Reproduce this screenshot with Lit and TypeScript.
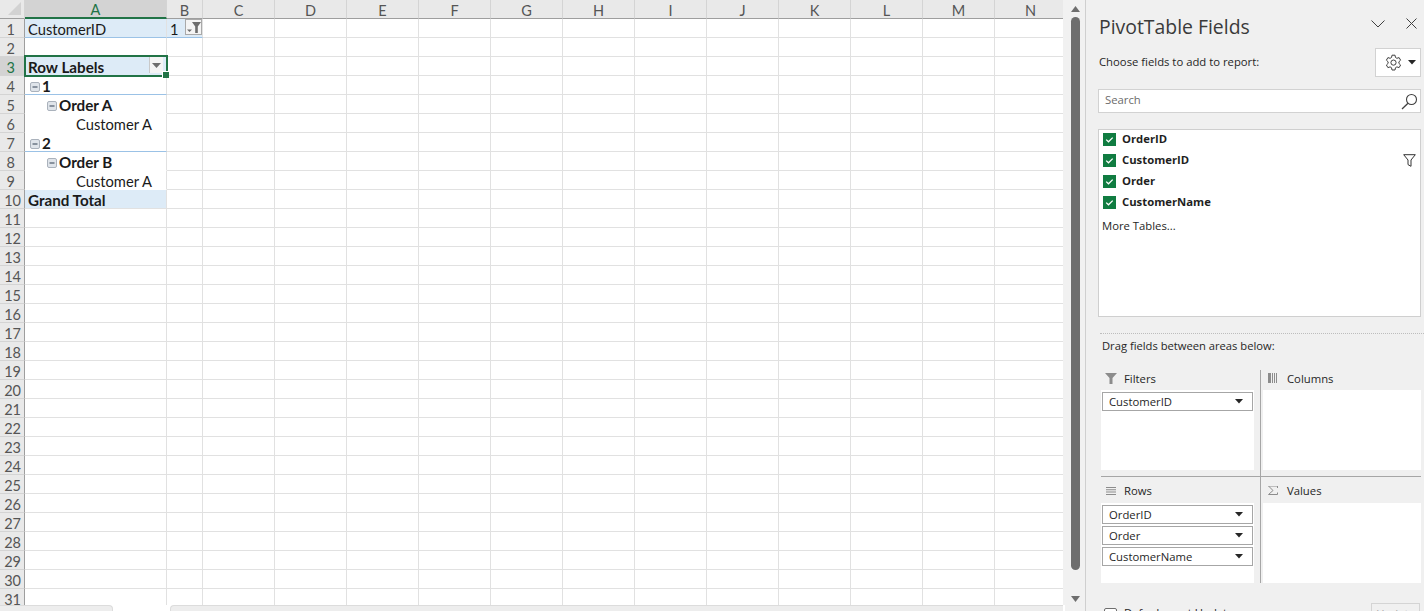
import { LitElement, html, css, svg } from "lit";
import { customElement } from "lit/decorators.js";

const COLS = ["A", "B", "C", "D", "E", "F", "G", "H", "I", "J", "K", "L", "M", "N"];
const ROWS = Array.from({ length: 31 }, (_, i) => i + 1);

const minus = html`<svg class="tog" width="10" height="10" viewBox="0 0 10 10"><rect x=".5" y=".5" width="9" height="9" rx="1.5" fill="#dfe4ea" stroke="#aab2bc"/><path d="M2.500 5h5" stroke="#4d5a6a" stroke-width="1.2"/></svg>`;
const caret = svg`<path d="M0 0h8L4 4.500z" fill="#262626"/>`;

type Cell = { cls?: string; body?: unknown };

const colA: Record<number, Cell> = {
  1: { cls: "fill blue-b", body: html`<span class="t">CustomerID</span>` },
  3: {
    cls: "fill bold nob",
    body: html`<span class="t">Row Labels</span><span class="drop a3"><svg width="9" height="5" viewBox="0 0 9 5"><path d="M0 0h9L4.500 5z" fill="#6d6d6d"/></svg></span>`,
  },
  4: { cls: "bold blue-b i1", body: html`${minus}<span class="t">1</span>` },
  5: { cls: "bold nob i2", body: html`${minus}<span class="t">Order A</span>` },
  6: { cls: "nob i3", body: html`<span class="t">Customer A</span>` },
  7: { cls: "bold blue-b i1", body: html`${minus}<span class="t">2</span>` },
  8: { cls: "bold nob i2", body: html`${minus}<span class="t">Order B</span>` },
  9: { cls: "nob i3", body: html`<span class="t">Customer A</span>` },
  10: { cls: "fill bold", body: html`<span class="t">Grand Total</span>` },
};

const fields = [
  { name: "OrderID", filter: false },
  { name: "CustomerID", filter: true },
  { name: "Order", filter: false },
  { name: "CustomerName", filter: false },
];

@customElement("app-root")
export class AppRoot extends LitElement {
  static styles = css`
    :host {
      display: flex;
      width: 1424px;
      height: 611px;
      overflow: hidden;
      background: #f0f0f0;
      font-family: "Open Sans", "Noto Sans", sans-serif;
      color: #262626;
    }
    .sheet {
      width: 1065px;
      flex: none;
      display: flex;
      flex-direction: column;
      overflow: hidden;
      background: #fff;
    }
    .gridwrap {
      height: 605px;
      flex: none;
      overflow: hidden;
      position: relative;
      background: #f1f1f1;
    }
    .grid {
      display: grid;
      grid-template-columns: 25px 142px 36px repeat(12, 72px);
      grid-template-rows: 19px repeat(31, 19px);
      width: 1063px;
      overflow: hidden;
      background: #fff;
      font-family: Lato, "Liberation Sans", sans-serif;
      font-size: 14.7px;
      color: #1a1a1a;
    }
    .corner {
      background: #e9e9e9;
      border-right: 1px solid #d4d4d4;
      border-bottom: 1px solid #9e9e9e;
      box-sizing: border-box;
      display: flex;
      align-items: flex-end;
      justify-content: flex-end;
      padding: 0 3px 3px 0;
    }
    .ch {
      box-sizing: border-box;
      background: #e9e9e9;
      border-right: 1px solid #d4d4d4;
      border-bottom: 1px solid #9e9e9e;
      display: flex;
      align-items: center;
      justify-content: center;
      color: #555;
      font-size: 14.500px;
      padding-top: 2px;
    }
    .ch.sel {
      background: #d3d3d3;
      color: #217346;
      border-bottom: 2px solid #217346;
    }
    .rh {
      box-sizing: border-box;
      background: #e9e9e9;
      border-right: 1px solid #9e9e9e;
      border-bottom: 1px solid #d4d4d4;
      display: flex;
      align-items: center;
      justify-content: flex-end;
      padding: 2px 9px 0 0;
      color: #555;
      font-size: 14.500px;
    }
    .rh.wide {
      padding-right: 3px;
    }
    .rh.sel {
      background: #d3d3d3;
      color: #217346;
    }
    .c {
      box-sizing: border-box;
      border-right: 1px solid #e1e1e1;
      border-bottom: 1px solid #e1e1e1;
      display: flex;
      align-items: center;
      white-space: nowrap;
      position: relative;
      padding: 2px 0 0 3px;
      min-width: 0;
    }
    .fill {
      background: #ddebf7;
    }
    .blue-b {
      border-bottom-color: #9bc2e6;
    }
    .nob {
      border-bottom-color: transparent;
    }
    .bold {
      font-weight: 700;
      font-size: 15.200px;
    }
    .i1 {
      padding-left: 5px;
    }
    .i2 {
      padding-left: 22px;
    }
    .i3 {
      padding-left: 51px;
    }
    .tog {
      flex: none;
      margin: 1px 2px 0 0;
    }
    .drop {
      position: absolute;
      box-sizing: border-box;
      background: #f4f4f4;
      display: flex;
      align-items: center;
      justify-content: center;
    }
    .drop.a3 {
      right: 3px;
      top: 0;
      width: 14px;
      height: 16px;
      border: 1px solid #c9c9c9;
      border-width: 0 0 0 1px;
    }
    .drop.b1 {
      left: 18px;
      top: 0;
      width: 17px;
      height: 16px;
      border: 1px solid #a9a9a9;
    }
    .selection {
      position: absolute;
      left: 24px;
      top: 55px;
      width: 144px;
      height: 22px;
      box-sizing: border-box;
      border: 2px solid #217346;
      pointer-events: none;
    }
    .handle {
      position: absolute;
      right: -3px;
      bottom: -3px;
      width: 6px;
      height: 6px;
      background: #217346;
      box-shadow: -1px -1px 0 #fff;
    }
    .tabs {
      flex: 1;
      display: flex;
      background: #fff;
    }
    .tab {
      background: #ededed;
      border: 1px solid #dcdcdc;
      border-bottom: none;
      box-sizing: border-box;
    }
    .tab.left {
      width: 113px;
      border-left: none;
      border-top-right-radius: 4px;
    }
    .tabgap {
      width: 57px;
    }
    .tab.right {
      width: 893px;
      border-top-left-radius: 4px;
      border-right: none;
    }
    .scroll {
      width: 21px;
      flex: none;
      background: #f1f1f1;
      display: flex;
      flex-direction: column;
      align-items: center;
      border-right: 1px solid #cfcfcf;
      box-sizing: border-box;
      padding-bottom: 4px;
    }
    .sb-btn {
      height: 17px;
      display: flex;
      align-items: center;
      justify-content: center;
      flex: none;
    }
    .sb-track {
      flex: 1;
      width: 100%;
      display: flex;
      justify-content: center;
    }
    .thumb {
      width: 9px;
      height: 553px;
      background: #6e6e6e;
      border-radius: 5px;
    }
    .panel {
      flex: 1;
      min-width: 0;
      background: #f0f0f0;
      box-sizing: border-box;
      padding: 0 3px 0 12px;
      display: flex;
      flex-direction: column;
      overflow: hidden;
      font-size: 11.300px;
      color: #262626;
    }
    .ptitle {
      flex: none;
      height: 47px;
      display: flex;
      justify-content: space-between;
      padding-left: 1px;
    }
    .ptitle h1 {
      margin: 14px 0 0;
      font-size: 19.400px;
      line-height: 26px;
      font-weight: 400;
      color: #3a3a3a;
    }
    .wincontrols {
      display: flex;
      gap: 21px;
      padding: 20px 4px 0 0;
      height: 13px;
    }
    .xicon {
      margin-top: -2px;
    }
    .choose {
      flex: none;
      height: 30px;
      display: flex;
      justify-content: space-between;
      align-items: center;
      padding-left: 1px;
    }
    .choose > span {
      padding-bottom: 2px;
    }
    .gearbtn {
      width: 46px;
      height: 29px;
      box-sizing: border-box;
      background: #fff;
      border: 1px solid #d2d2d2;
      display: flex;
      align-items: center;
      padding-left: 9px;
      gap: 6px;
    }
    .search {
      flex: none;
      margin-top: 12px;
      height: 24px;
      box-sizing: border-box;
      border: 1px solid #d2d2d2;
      background: #fff;
      display: flex;
      align-items: center;
      justify-content: space-between;
      padding: 0 2px 0 6px;
      color: #6b6b6b;
      width: 100%;
    }
    .search > span {
      padding-bottom: 4px;
    }
    .list {
      flex: none;
      margin-top: 16px;
      height: 188px;
      box-sizing: border-box;
      border: 1px solid #cfcfcf;
      background: #fff;
    }
    .field {
      height: 21px;
      display: flex;
      align-items: center;
      padding: 0 4px;
      gap: 6px;
      font-weight: 700;
      color: #1f1f1f;
    }
    .field:first-child {
      margin-top: -1px;
    }
    .field .nm {
      flex: 1;
      padding-bottom: 2px;
    }
    .more {
      padding: 3px 3px 0;
      line-height: 20px;
    }
    .dots {
      flex: none;
      margin: 16px -3px 0 2px;
      border-top: 1px dotted #bdbdbd;
      height: 0;
    }
    .drag {
      flex: none;
      padding-left: 4px;
      height: 23px;
      line-height: 23px;
      font-size: 11.200px;
    }
    .areas {
      flex: none;
      margin: 13px 0 0 3px;
      display: grid;
      grid-template-columns: 153px 6px 1px 2px 158px;
      grid-template-rows: 20px 80px 6px 1px 26px 80px;
      height: 213px;
    }
    .ah {
      display: flex;
      align-items: center;
      gap: 7px;
      padding-left: 4px;
    }
    .ah.top {
      padding-bottom: 4px;
    }
    .ah.right {
      padding-left: 5px;
      gap: 9px;
    }
    .ah.f { grid-area: 1 / 1; }
    .ah.co { grid-area: 1 / 5; }
    .ah.ro { grid-area: 5 / 1; padding-top: 1px; }
    .ah.va { grid-area: 5 / 5; padding-top: 1px; }
    .ab {
      background: #fff;
      box-sizing: border-box;
      padding: 2px 1px 0;
      display: flex;
      flex-direction: column;
      gap: 2px;
    }
    .ab.f { grid-area: 2 / 1; }
    .ab.co { grid-area: 2 / 5; }
    .ab.ro { grid-area: 6 / 1; }
    .ab.va { grid-area: 6 / 5; }
    .vline {
      grid-column: 3;
      grid-row: 1 / -1;
      background: #a6a6a6;
    }
    .hline {
      grid-row: 4;
      grid-column: 1 / -1;
      background: #a6a6a6;
    }
    .pill {
      height: 19px;
      box-sizing: border-box;
      border: 1px solid #a6a6a6;
      background: #fff;
      display: flex;
      align-items: center;
      justify-content: space-between;
      padding: 0 9px 0 6px;
      flex: none;
    }
    .foot {
      flex: none;
      margin-top: 20px;
      display: flex;
      justify-content: space-between;
      padding-left: 6px;
    }
    .defer {
      display: flex;
      gap: 7px;
      align-items: flex-start;
      padding-top: 5px;
    }
    .defer-label {
      margin-top: -3px;
    }
    .cb {
      width: 13px;
      height: 13px;
      box-sizing: border-box;
      background: #fff;
      border: 1px solid #6e6e6e;
      border-radius: 2px;
    }
    .upd {
      width: 49px;
      height: 24px;
      box-sizing: border-box;
      border: 1px solid #d4d4d4;
      color: #a8a8a8;
      display: flex;
      justify-content: center;
      padding-top: 2px;
      margin-right: 1px;
    }
  `;

  private colCells(r: number, i: number) {
    if (i === 0) {
      const c = colA[r];
      return html`<div class="c ${c?.cls ?? ""}">${c?.body ?? ""}</div>`;
    }
    if (i === 1 && r === 1) {
      return html`<div class="c fill blue-b">
        <span class="t">1</span>
        <span class="drop b1"
          ><svg width="14" height="11" viewBox="0 0 14 11">
            <path d="M5 0h9l-3.200 4.500V11H8.200V4.500z" fill="#6d6d6d" />
            <path d="M0 7.500h5L2.500 10z" fill="#6d6d6d" /></svg
        ></span>
      </div>`;
    }
    return html`<div class="c"></div>`;
  }

  private pill(name: string) {
    return html`<div class="pill">
      <span>${name}</span>
      <svg width="8" height="5" viewBox="0 0 8 5">${caret}</svg>
    </div>`;
  }

  render() {
    return html`
      <div class="sheet">
        <div class="gridwrap">
          <div class="grid">
            <div class="corner">
              <svg width="13" height="13" viewBox="0 0 13 13"><path d="M13 0v13H0z" fill="#d2d2d2" /></svg>
            </div>
            ${COLS.map((c, i) => html`<div class="ch ${i === 0 ? "sel" : ""}">${c}</div>`)}
            ${ROWS.map(
              (r) => html`
                <div class="rh ${r >= 10 ? "wide" : ""} ${r === 3 ? "sel" : ""}">${r}</div>
                ${COLS.map((_, i) => this.colCells(r, i))}
              `
            )}
          </div>
          <div class="selection"><div class="handle"></div></div>
        </div>
        <div class="tabs">
          <div class="tab left"></div>
          <div class="tabgap"></div>
          <div class="tab right"></div>
        </div>
      </div>

      <div class="scroll">
        <div class="sb-btn">
          <svg width="9" height="6" viewBox="0 0 9 6"><path d="M0 6h9L4.500 0z" fill="#6e6e6e" /></svg>
        </div>
        <div class="sb-track"><div class="thumb"></div></div>
        <div class="sb-btn">
          <svg width="9" height="6" viewBox="0 0 9 6"><path d="M0 0h9L4.500 6z" fill="#6e6e6e" /></svg>
        </div>
      </div>

      <div class="panel">
        <div class="ptitle">
          <h1>PivotTable Fields</h1>
          <div class="wincontrols">
            <svg width="14" height="8" viewBox="0 0 14 8"><path d="M.5.5L7 7l6.500-6.500" fill="none" stroke="#404040" /></svg>
            <svg class="xicon" width="11" height="11" viewBox="0 0 11 11"><path d="M.5.5l10 10M10.500.5l-10 10" fill="none" stroke="#404040" /></svg>
          </div>
        </div>
        <div class="choose">
          <span>Choose fields to add to report:</span>
          <div class="gearbtn">
            <svg width="17" height="17" viewBox="0 0 17 17">
              <path
                d="M7 1.200h3l.5 2.300 1.400.8 2.200-.7 1.500 2.600-1.700 1.600v1.600l1.700 1.600-1.500 2.600-2.200-.7-1.400.8-.5 2.300H7l-.5-2.300-1.400-.8-2.200.7-1.500-2.600 1.700-1.600V7.800L1.400 6.200l1.500-2.600 2.200.7 1.400-.8z"
                fill="none"
                stroke="#404040"
              />
              <circle cx="8.5" cy="8.6" r="2.6" fill="none" stroke="#404040" />
            </svg>
            <svg width="8" height="5" viewBox="0 0 8 5">${caret}</svg>
          </div>
        </div>
        <div class="search">
          <span>Search</span>
          <svg width="17" height="17" viewBox="0 0 17 17">
            <circle cx="10.5" cy="6.5" r="5" fill="none" stroke="#404040" stroke-width="1.1" />
            <path d="M7 10.200L1 16" stroke="#404040" stroke-width="1.3" />
          </svg>
        </div>
        <div class="list">
          ${fields.map(
            (f) => html`<div class="field">
              <svg width="13" height="13" viewBox="0 0 13 13">
                <rect width="13" height="13" fill="#107c41" />
                <path d="M3.200 6.600l2.300 2.200 4.200-4.200" fill="none" stroke="#fff" stroke-width="1.3" />
              </svg>
              <span class="nm">${f.name}</span>
              ${f.filter
                ? html`<svg width="13" height="13" viewBox="0 0 13 13">
                    <path d="M.7.7h11.600L8 6v6.300L5 10.600V6z" fill="none" stroke="#333" />
                  </svg>`
                : ""}
            </div>`
          )}
          <div class="more">More Tables...</div>
        </div>
        <div class="dots"></div>
        <div class="drag">Drag fields between areas below:</div>
        <div class="areas">
          <div class="vline"></div>
          <div class="hline"></div>
          <div class="ah top f">
            <svg width="12" height="11" viewBox="0 0 12 11"><path d="M0 0h12L7.500 5v6h-3V5z" fill="#8c8c8c" /></svg>
            <span>Filters</span>
          </div>
          <div class="ah top right co">
            <svg width="10" height="10" viewBox="0 0 10 10">
              <path d="M0 0h3v10H0zM4 0h1v10H4zM6 0h1v10H6zM8 0h1v10H8z" fill="#8c8c8c" />
            </svg>
            <span>Columns</span>
          </div>
          <div class="ab f">${this.pill("CustomerID")}</div>
          <div class="ab co"></div>
          <div class="ah ro">
            <svg width="12" height="8" viewBox="0 0 12 8">
              <path d="M1 0h10v1H1zM1 2.300h10v1H1zM1 4.600h10v1H1zM1 7h10v1H1z" fill="#8c8c8c" />
            </svg>
            <span>Rows</span>
          </div>
          <div class="ah right va">
            <svg width="10" height="9" viewBox="0 0 10 9">
              <path d="M.5 0h9v2M.5 0L5 4.500.5 8.500h9v-2" fill="none" stroke="#8c8c8c" />
            </svg>
            <span>Values</span>
          </div>
          <div class="ab ro">${this.pill("OrderID")}${this.pill("Order")}${this.pill("CustomerName")}</div>
          <div class="ab va"></div>
        </div>
        <div class="foot">
          <div class="defer"><span class="cb"></span><span class="defer-label">Defer Layout Update</span></div>
          <div class="upd">Update</div>
        </div>
      </div>
    `;
  }
}
